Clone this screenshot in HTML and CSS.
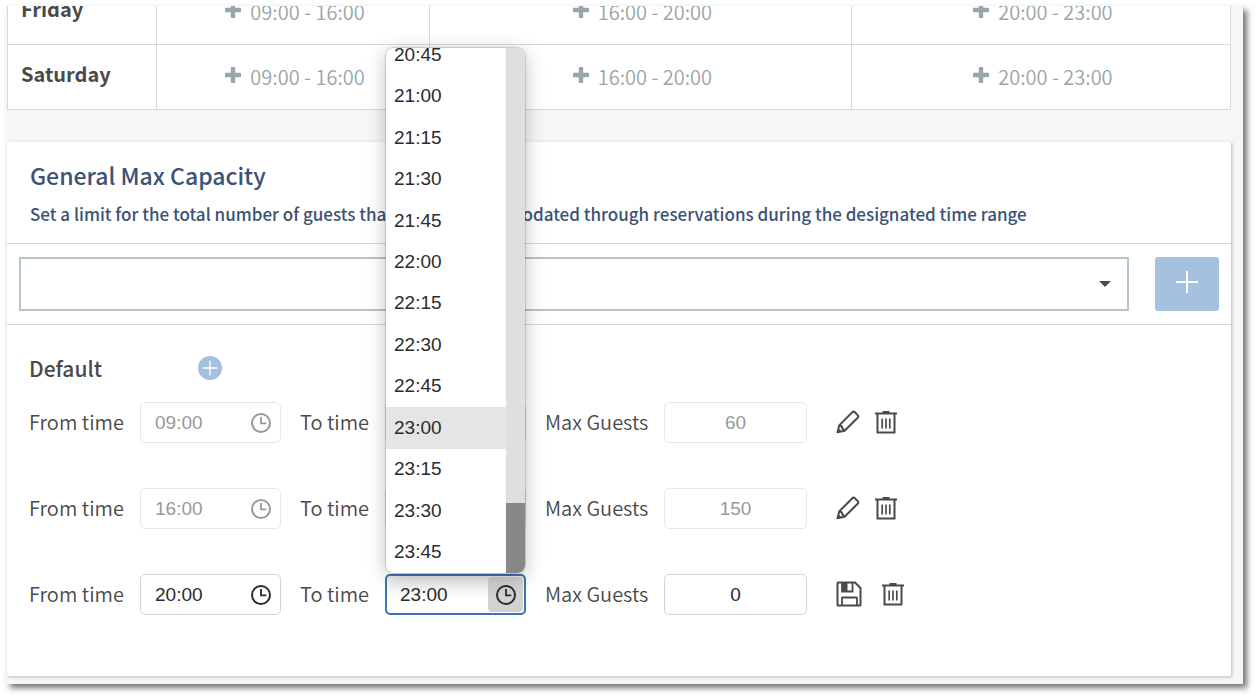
FILE: index.html
```html
<!DOCTYPE html>
<html lang="en">
<head>
    <meta charset="UTF-8">
    <meta name="viewport" content="width=device-width, initial-scale=1.0">
    <title>General Max Capacity</title>
    <link rel="stylesheet" href="styles.css">
</head>
<body>

    <!-- shared icons -->
    <svg class="sprite" aria-hidden="true">
        <symbol id="plus-bold" viewBox="0 0 16 16">
            <path d="M6.5 0h3q.7 0 .7.7v5.1h5.1q.7 0 .7.7v3q0 .7-.7.7h-5.1v5.1q0 .7-.7.7h-3q-.7 0-.7-.7v-5.1H.7Q0 10.2 0 9.5v-3q0-.7.7-.7h5.1V.7q0-.7.7-.7z" fill="currentColor"/>
        </symbol>
        <symbol id="plus-thin" viewBox="0 0 24 24">
            <path d="M12 1v22M1 12h22" fill="none" stroke="currentColor" stroke-width="2"/>
        </symbol>
        <symbol id="clock" viewBox="0 0 20 20">
            <circle cx="10" cy="10" r="9" fill="none" stroke="currentColor" stroke-width="2"/>
            <path d="M10 4v6.3h5.3" fill="none" stroke="currentColor" stroke-width="1.8"/>
        </symbol>
        <symbol id="pencil" viewBox="0 0 24 24">
            <g fill="none" stroke="currentColor" stroke-width="2" stroke-linejoin="round">
                <path d="M1.5 22.3L3.2 15.4 16.3 2.3Q17.6 1 18.9 2.3L21.7 5.1Q23 6.4 21.7 7.7L8.6 20.7z"/>
                <path d="M3.2 15.4L5.7 16.2 6.2 18.3 8.6 20.7"/>
            </g>
            <path d="M1.5 22.3l1-4 3 3z" fill="currentColor"/>
        </symbol>
        <symbol id="trash" viewBox="0 0 24 24">
            <path d="M1 3.5h22M8.5 2h7" fill="none" stroke="currentColor" stroke-width="2"/>
            <path d="M3.5 4v18.5h17V4" fill="none" stroke="currentColor" stroke-width="2"/>
            <path d="M8.2 8.5v10M12 8.5v10M15.8 8.5v10" fill="none" stroke="currentColor" stroke-width="1.7"/>
        </symbol>
        <symbol id="save" viewBox="0 0 26 26">
            <path d="M2 1.5h17l5.5 5.5v17q0 .5-.5.5H2q-.5 0-.5-.5V2q0-.5.5-.5z" fill="none" stroke="currentColor" stroke-width="2"/>
            <path d="M6 1.5v9h10.5v-9M6 24.5v-7.5q0-.5.5-.5h14q.5 0 .5.5v7.5" fill="none" stroke="currentColor" stroke-width="1.8"/>
            <path d="M6 1.5h5.5v9H6z" fill="currentColor"/>
        </symbol>
    </svg>

    <div class="frame">
        <table class="shifts">
            <colgroup>
                <col class="col-day">
                <col class="col-lunch">
                <col class="col-afternoon">
                <col class="col-dinner">
            </colgroup>
            <tbody>
                <tr>
                    <th scope="row">Friday</th>
                    <td><button type="button" class="shift"><svg><use href="#plus-bold"/></svg>09:00 - 16:00</button></td>
                    <td><button type="button" class="shift"><svg><use href="#plus-bold"/></svg>16:00 - 20:00</button></td>
                    <td><button type="button" class="shift"><svg><use href="#plus-bold"/></svg>20:00 - 23:00</button></td>
                </tr>
                <tr>
                    <th scope="row">Saturday</th>
                    <td><button type="button" class="shift"><svg><use href="#plus-bold"/></svg>09:00 - 16:00</button></td>
                    <td><button type="button" class="shift"><svg><use href="#plus-bold"/></svg>16:00 - 20:00</button></td>
                    <td><button type="button" class="shift"><svg><use href="#plus-bold"/></svg>20:00 - 23:00</button></td>
                </tr>
            </tbody>
        </table>

        <section class="panel">
            <header class="panel-header">
                <h2>General Max Capacity</h2>
                <p>Set a limit for the total number of guests that can be accommodated through reservations during the designated time range</p>
            </header>

            <div class="add-bar">
                <div class="picker">
                    <select aria-label="Capacity rule">
                        <option></option>
                    </select>
                    <svg class="caret" viewBox="0 0 12 6"><path d="M0 0h12L6 6z" fill="currentColor"/></svg>
                </div>
                <button type="button" class="add-button" aria-label="Add rule"><svg><use href="#plus-thin"/></svg></button>
            </div>

            <form class="limits">
                <div class="limits-title">
                    <h3>Default</h3>
                    <button type="button" class="round-button" aria-label="Add time range"><svg><use href="#plus-thin"/></svg></button>
                </div>

                <div class="limit-row">
                    <label class="from-label" for="from1">From time</label>
                    <div class="time-field disabled">
                        <input type="text" id="from1" value="09:00" disabled>
                        <button type="button" aria-label="Choose time" disabled><svg><use href="#clock"/></svg></button>
                    </div>
                    <label class="to-label" for="to1">To time</label>
                    <div class="time-field disabled">
                        <input type="text" id="to1" value="16:00" disabled>
                        <button type="button" aria-label="Choose time" disabled><svg><use href="#clock"/></svg></button>
                    </div>
                    <label class="guests-label" for="guests1">Max Guests</label>
                    <input type="text" class="guests" id="guests1" value="60" disabled>
                    <div class="actions">
                        <button type="button" aria-label="Edit"><svg><use href="#pencil"/></svg></button>
                        <button type="button" aria-label="Delete"><svg><use href="#trash"/></svg></button>
                    </div>
                </div>

                <div class="limit-row">
                    <label class="from-label" for="from2">From time</label>
                    <div class="time-field disabled">
                        <input type="text" id="from2" value="16:00" disabled>
                        <button type="button" aria-label="Choose time" disabled><svg><use href="#clock"/></svg></button>
                    </div>
                    <label class="to-label" for="to2">To time</label>
                    <div class="time-field disabled">
                        <input type="text" id="to2" value="20:00" disabled>
                        <button type="button" aria-label="Choose time" disabled><svg><use href="#clock"/></svg></button>
                    </div>
                    <label class="guests-label" for="guests2">Max Guests</label>
                    <input type="text" class="guests" id="guests2" value="150" disabled>
                    <div class="actions">
                        <button type="button" aria-label="Edit"><svg><use href="#pencil"/></svg></button>
                        <button type="button" aria-label="Delete"><svg><use href="#trash"/></svg></button>
                    </div>
                </div>

                <div class="limit-row">
                    <label class="from-label" for="from3">From time</label>
                    <div class="time-field">
                        <input type="text" id="from3" value="20:00">
                        <button type="button" aria-label="Choose time"><svg><use href="#clock"/></svg></button>
                    </div>
                    <label class="to-label" for="to3">To time</label>
                    <div class="time-field open">
                        <input type="text" id="to3" value="23:00">
                        <button type="button" aria-label="Choose time"><svg><use href="#clock"/></svg></button>
                        <div class="dropdown">
                            <ul class="times" role="listbox" aria-label="To time">
                                <li role="option">20:45</li>
                                <li role="option">21:00</li>
                                <li role="option">21:15</li>
                                <li role="option">21:30</li>
                                <li role="option">21:45</li>
                                <li role="option">22:00</li>
                                <li role="option">22:15</li>
                                <li role="option">22:30</li>
                                <li role="option">22:45</li>
                                <li role="option" class="selected" aria-selected="true">23:00</li>
                                <li role="option">23:15</li>
                                <li role="option">23:30</li>
                                <li role="option">23:45</li>
                            </ul>
                            <div class="scrollbar"><div class="thumb"></div></div>
                        </div>
                    </div>
                    <label class="guests-label" for="guests3">Max Guests</label>
                    <input type="text" class="guests" id="guests3" value="0">
                    <div class="actions saving">
                        <button type="button" aria-label="Save"><svg><use href="#save"/></svg></button>
                        <button type="button" aria-label="Delete"><svg><use href="#trash"/></svg></button>
                    </div>
                </div>
            </form>
        </section>
    </div>

</body>
</html>
```
FILE: styles.css
```css
* {
    box-sizing: border-box;
}

body {
    margin: 0;
    padding: 6px 14px 14px 6px;
    background-color: #fff;
    color: #4a4a4a;
    font-family: "Noto Sans CJK SC", "Open Sans", sans-serif;
    font-size: 20px;
    line-height: 28px;
}

button {
    display: flex;
    align-items: center;
    justify-content: center;
    padding: 0;
    border: none;
    background: none;
    color: inherit;
    font: inherit;
    cursor: pointer;
}

.sprite {
    position: absolute;
    width: 0;
    height: 0;
}

/* scrolled to the end, so the rows above are cut off */
.frame {
    display: flex;
    flex-direction: column;
    justify-content: flex-end;
    height: calc(100vh - 20px);
    padding: 0 12px 8px 1px;
    overflow: hidden;
    background-color: #f6f6f6;
    box-shadow: 4px 4px 6px rgba(0, 0, 0, 0.55);
}

/* Shifts table */
.shifts {
    flex-shrink: 0;
    width: 100%;
    margin-bottom: 32px;
    table-layout: fixed;
    border-collapse: collapse;
    background-color: #fff;
}

.shifts tr {
    height: 65px;
}

.shifts th,
.shifts td {
    padding: 0;
    border: 1px solid #d8dada;
}

.shifts th {
    padding: 0 0 6px 13px;
    text-align: left;
    font-weight: 700;
}

.col-day {
    width: 12.2%;
}

.col-lunch {
    width: 22.3%;
}

.col-afternoon {
    width: 34.5%;
}

.shift {
    gap: 9px;
    width: 100%;
    padding-left: 4px;
    color: #98a5aa;
    font-weight: 350;
}

.shift svg {
    width: 16px;
    height: 16px;
    margin-bottom: 4px;
}

/* Capacity panel */
.panel {
    flex-shrink: 0;
    background-color: #fff;
    box-shadow: 1px 1px 3px rgba(0, 0, 0, 0.25);
}

.panel-header {
    padding: 16px 23px;
    border-bottom: 1px solid #d8dada;
    color: #3c5275;
}

.panel-header h2 {
    margin: 0 0 8px;
    font-size: 23px;
    font-weight: 500;
    line-height: 34px;
}

.panel-header p {
    margin: 0;
    font-size: 17px;
    font-weight: 500;
    line-height: 27px;
}

.add-bar {
    display: flex;
    gap: 26px;
    padding: 13px 12px;
    border-bottom: 1px solid #d8dada;
}

.picker {
    position: relative;
    flex: 1;
}

.picker select {
    display: block;
    width: 100%;
    height: 54px;
    border: 2px solid #b5c5c9;
    border-radius: 0;
    background-color: #fff;
    appearance: none;
}

.caret {
    position: absolute;
    top: 24px;
    right: 18px;
    width: 12px;
    height: 6px;
    pointer-events: none;
}

.add-button {
    width: 64px;
    height: 54px;
    border-radius: 3px;
    background-color: #a4c2df;
    color: #fff;
}

.add-button svg {
    width: 24px;
    height: 24px;
    margin-bottom: 4px;
}

.limits {
    padding: 24px 24px 61px 22px;
}

.limits-title {
    display: flex;
    align-items: center;
    height: 38px;
    margin-bottom: 15px;
}

.limits-title h3 {
    width: 169px;
    margin: 0;
    font-size: 21px;
    font-weight: 500;
}

.round-button {
    width: 24px;
    height: 24px;
    border-radius: 50%;
    background-color: #a4c2df;
    color: #fff;
}

.round-button svg {
    width: 16px;
    height: 16px;
}

.limit-row {
    display: flex;
    align-items: center;
    height: 41px;
}

.limit-row + .limit-row {
    margin-top: 45px;
}

.from-label {
    width: 111px;
}

.to-label {
    width: 104px;
    padding-left: 19px;
}

.guests-label {
    width: 138px;
    padding-left: 19px;
}

.limit-row label {
    padding-bottom: 2px;
    font-weight: 350;
}

.time-field,
.guests {
    height: 41px;
    border: 1px solid #d4d4d4;
    border-radius: 5px;
    background-color: #fff;
    color: #2b2b2b;
}

.time-field {
    position: relative;
    display: flex;
    align-items: center;
    width: 141px;
    padding: 0 2px 0 14px;
}

.time-field input,
.guests {
    font-family: "Liberation Sans", Arial, sans-serif;
    font-size: 19px;
}

.time-field input {
    flex: 1;
    min-width: 0;
    padding: 0;
    border: none;
    outline: none;
    background: none;
    color: inherit;
}

.time-field button {
    width: 35px;
    height: 35px;
    border-radius: 4px;
}

.time-field button svg {
    width: 20px;
    height: 20px;
}

.guests {
    width: 143px;
    text-align: center;
}

.time-field.disabled,
.guests:disabled {
    border-color: #e8e8e8;
    color: #999;
}

.time-field.open {
    border: 2px solid #3f72b5;
    padding: 0 1px 0 13px;
    background-image: linear-gradient(#ececec, #fff 24px);
}

.time-field.open button {
    background-color: #d2d2d2;
}

/* Time list */
.dropdown {
    position: absolute;
    right: -1px;
    bottom: 40px;
    left: -1px;
    display: flex;
    align-items: flex-end;
    height: 525px;
    overflow: hidden;
    border-radius: 8px;
    background-color: #fff;
    box-shadow: 0 0 1px 1px rgba(0, 0, 0, 0.15), 0 4px 20px rgba(0, 0, 0, 0.25);
}

.times {
    display: grid;
    grid-auto-rows: 1fr;
    flex: 1;
    height: 539px;
    margin: 0;
    padding: 0;
    list-style: none;
    color: #2b2b2b;
    font-family: "Liberation Sans", Arial, sans-serif;
    font-size: 19px;
}

.times li {
    display: flex;
    align-items: center;
    padding-left: 8px;
}

.times .selected {
    background-color: #e5e5e5;
}

.scrollbar {
    display: flex;
    align-items: flex-end;
    width: 19px;
    height: 100%;
    background-color: #dfdfdf;
}

.thumb {
    width: 100%;
    height: 70px;
    background-color: #888;
}

/* Row actions */
.actions {
    display: flex;
    align-items: center;
    gap: 14px;
    margin-left: 29px;
    padding-bottom: 2px;
}

.actions svg {
    width: 24px;
    height: 24px;
}

.actions.saving {
    gap: 19px;
}

.actions.saving button:first-child svg {
    width: 26px;
    height: 26px;
}
```
